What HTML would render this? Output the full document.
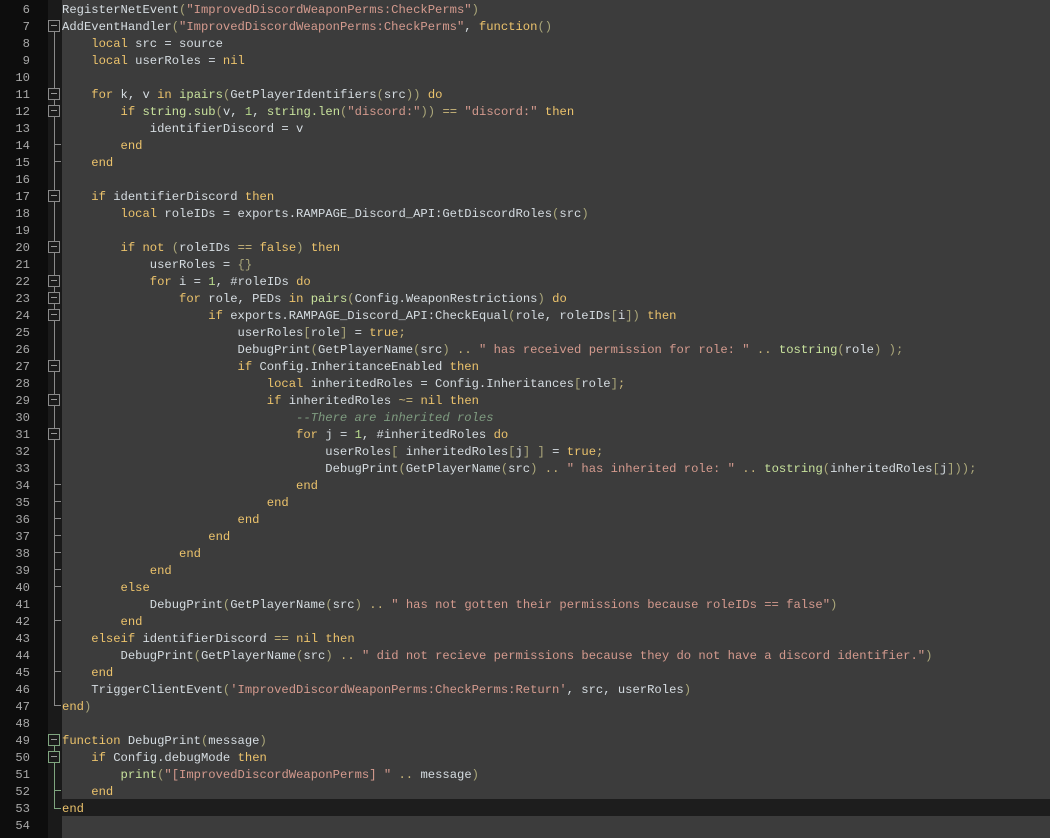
<!DOCTYPE html>
<html><head><meta charset="utf-8"><style>
body{margin:0;width:1050px;height:838px;background:#3c3c3c;overflow:hidden;position:relative;font-family:"Liberation Mono",monospace;font-size:12.2px}
#gut{position:absolute;left:0;top:0;width:48px;height:838px;background:#0d0d0d}
#fold{position:absolute;left:48px;top:0;width:14px;height:838px;background:#1a1a1a}
#cur{position:absolute;left:62px;top:799px;width:988px;height:17px;background:#1d1d1d}
.ln{position:absolute;left:0;width:30px;text-align:right;color:#a8a8a8;line-height:17px;height:17px;margin-top:2px}
.l{position:absolute;left:62px;white-space:pre;line-height:17px;height:17px;color:#d6dde2;margin-top:2px}
.k{color:#ecc36c}.s{color:#d49a8e}.f{color:#c8e29c}.p{color:#aba77a}.n{color:#b8d98c}.c{color:#7f9c80;font-style:italic}.o{color:#cdb97c}
.bx{position:absolute;left:48px;width:10px;height:10px;border:1px solid #8a8a8a;background:#1a1a1a}
.bx:after{content:"";position:absolute;left:2px;top:4px;width:6px;height:1px;background:#9a9a9a}
.vl{position:absolute;left:54px;width:1px;background:#8a8a8a}
.tk{position:absolute;left:54px;width:7px;height:1px;background:#8a8a8a}
.g{background:#7fa57f}
</style></head><body>
<div id="gut"></div><div id="fold"></div><div id="cur"></div>
<div class="ln" style="top:0">6</div><div class="ln" style="top:17px">7</div><div class="ln" style="top:34px">8</div><div class="ln" style="top:51px">9</div><div class="ln" style="top:68px">10</div><div class="ln" style="top:85px">11</div><div class="ln" style="top:102px">12</div><div class="ln" style="top:119px">13</div><div class="ln" style="top:136px">14</div><div class="ln" style="top:153px">15</div><div class="ln" style="top:170px">16</div><div class="ln" style="top:187px">17</div><div class="ln" style="top:204px">18</div><div class="ln" style="top:221px">19</div><div class="ln" style="top:238px">20</div><div class="ln" style="top:255px">21</div><div class="ln" style="top:272px">22</div><div class="ln" style="top:289px">23</div><div class="ln" style="top:306px">24</div><div class="ln" style="top:323px">25</div><div class="ln" style="top:340px">26</div><div class="ln" style="top:357px">27</div><div class="ln" style="top:374px">28</div><div class="ln" style="top:391px">29</div><div class="ln" style="top:408px">30</div><div class="ln" style="top:425px">31</div><div class="ln" style="top:442px">32</div><div class="ln" style="top:459px">33</div><div class="ln" style="top:476px">34</div><div class="ln" style="top:493px">35</div><div class="ln" style="top:510px">36</div><div class="ln" style="top:527px">37</div><div class="ln" style="top:544px">38</div><div class="ln" style="top:561px">39</div><div class="ln" style="top:578px">40</div><div class="ln" style="top:595px">41</div><div class="ln" style="top:612px">42</div><div class="ln" style="top:629px">43</div><div class="ln" style="top:646px">44</div><div class="ln" style="top:663px">45</div><div class="ln" style="top:680px">46</div><div class="ln" style="top:697px">47</div><div class="ln" style="top:714px">48</div><div class="ln" style="top:731px">49</div><div class="ln" style="top:748px">50</div><div class="ln" style="top:765px">51</div><div class="ln" style="top:782px">52</div><div class="ln" style="top:799px">53</div><div class="ln" style="top:816px">54</div>

<div class="vl" style="top:25px;height:680px"></div>
<div class="tk" style="top:705px"></div>
<div class="vl g" style="top:739px;height:69px"></div>
<div class="tk g" style="top:808px"></div>
<div class="tk" style="top:161px"></div><div class="tk" style="top:144px"></div>
<div class="tk" style="top:586px"></div><div class="tk" style="top:620px"></div><div class="tk" style="top:671px"></div>
<div class="tk" style="top:569px"></div><div class="tk" style="top:552px"></div><div class="tk" style="top:535px"></div><div class="tk" style="top:518px"></div><div class="tk" style="top:501px"></div><div class="tk" style="top:484px"></div>
<div class="tk g" style="top:790px"></div>
<div class="bx" style="top:20px"></div><div class="bx" style="top:88px"></div><div class="bx" style="top:105px"></div><div class="bx" style="top:190px"></div><div class="bx" style="top:241px"></div><div class="bx" style="top:275px"></div><div class="bx" style="top:292px"></div><div class="bx" style="top:309px"></div><div class="bx" style="top:360px"></div><div class="bx" style="top:394px"></div><div class="bx" style="top:428px"></div><div class="bx" style="top:734px;border-color:#7fa57f"></div><div class="bx" style="top:751px;border-color:#7fa57f"></div>

<div class="l" style="top:0">RegisterNetEvent<span class="p">(</span><span class="s">"ImprovedDiscordWeaponPerms:CheckPerms"</span><span class="p">)</span></div>
<div class="l" style="top:17px">AddEventHandler<span class="p">(</span><span class="s">"ImprovedDiscordWeaponPerms:CheckPerms"</span>, <span class="k">function</span><span class="p">()</span></div>
<div class="l" style="top:34px">    <span class="k">local</span> src = source</div>
<div class="l" style="top:51px">    <span class="k">local</span> userRoles = <span class="k">nil</span></div>
<div class="l" style="top:85px">    <span class="k">for</span> k, v <span class="k">in</span> <span class="f">ipairs</span><span class="p">(</span>GetPlayerIdentifiers<span class="p">(</span>src<span class="p">))</span> <span class="k">do</span></div>
<div class="l" style="top:102px">        <span class="k">if</span> <span class="f">string.sub</span><span class="p">(</span>v, <span class="n">1</span>, <span class="f">string.len</span><span class="p">(</span><span class="s">"discord:"</span><span class="p">))</span> <span class="o">==</span> <span class="s">"discord:"</span> <span class="k">then</span></div>
<div class="l" style="top:119px">            identifierDiscord = v</div>
<div class="l" style="top:136px">        <span class="k">end</span></div>
<div class="l" style="top:153px">    <span class="k">end</span></div>
<div class="l" style="top:187px">    <span class="k">if</span> identifierDiscord <span class="k">then</span></div>
<div class="l" style="top:204px">        <span class="k">local</span> roleIDs = exports.RAMPAGE_Discord_API:GetDiscordRoles<span class="p">(</span>src<span class="p">)</span></div>
<div class="l" style="top:238px">        <span class="k">if</span> <span class="k">not</span> <span class="p">(</span>roleIDs <span class="o">==</span> <span class="k">false</span><span class="p">)</span> <span class="k">then</span></div>
<div class="l" style="top:255px">            userRoles = <span class="p">{}</span></div>
<div class="l" style="top:272px">            <span class="k">for</span> i = <span class="n">1</span>, #roleIDs <span class="k">do</span></div>
<div class="l" style="top:289px">                <span class="k">for</span> role, PEDs <span class="k">in</span> <span class="f">pairs</span><span class="p">(</span>Config.WeaponRestrictions<span class="p">)</span> <span class="k">do</span></div>
<div class="l" style="top:306px">                    <span class="k">if</span> exports.RAMPAGE_Discord_API:CheckEqual<span class="p">(</span>role, roleIDs<span class="p">[</span>i<span class="p">])</span> <span class="k">then</span></div>
<div class="l" style="top:323px">                        userRoles<span class="p">[</span>role<span class="p">]</span> = <span class="k">true</span><span class="o">;</span></div>
<div class="l" style="top:340px">                        DebugPrint<span class="p">(</span>GetPlayerName<span class="p">(</span>src<span class="p">)</span> <span class="o">..</span> <span class="s">" has received permission for role: "</span> <span class="o">..</span> <span class="f">tostring</span><span class="p">(</span>role<span class="p">)</span> <span class="p">);</span></div>
<div class="l" style="top:357px">                        <span class="k">if</span> Config.InheritanceEnabled <span class="k">then</span></div>
<div class="l" style="top:374px">                            <span class="k">local</span> inheritedRoles = Config.Inheritances<span class="p">[</span>role<span class="p">]</span><span class="o">;</span></div>
<div class="l" style="top:391px">                            <span class="k">if</span> inheritedRoles <span class="o">~=</span> <span class="k">nil</span> <span class="k">then</span></div>
<div class="l" style="top:408px">                                <span class="c">--There are inherited roles</span></div>
<div class="l" style="top:425px">                                <span class="k">for</span> j = <span class="n">1</span>, #inheritedRoles <span class="k">do</span></div>
<div class="l" style="top:442px">                                    userRoles<span class="p">[</span> inheritedRoles<span class="p">[</span>j<span class="p">]</span> <span class="p">]</span> = <span class="k">true</span><span class="o">;</span></div>
<div class="l" style="top:459px">                                    DebugPrint<span class="p">(</span>GetPlayerName<span class="p">(</span>src<span class="p">)</span> <span class="o">..</span> <span class="s">" has inherited role: "</span> <span class="o">..</span> <span class="f">tostring</span><span class="p">(</span>inheritedRoles<span class="p">[</span>j<span class="p">]));</span></div>
<div class="l" style="top:476px">                                <span class="k">end</span></div>
<div class="l" style="top:493px">                            <span class="k">end</span></div>
<div class="l" style="top:510px">                        <span class="k">end</span></div>
<div class="l" style="top:527px">                    <span class="k">end</span></div>
<div class="l" style="top:544px">                <span class="k">end</span></div>
<div class="l" style="top:561px">            <span class="k">end</span></div>
<div class="l" style="top:578px">        <span class="k">else</span></div>
<div class="l" style="top:595px">            DebugPrint<span class="p">(</span>GetPlayerName<span class="p">(</span>src<span class="p">)</span> <span class="o">..</span> <span class="s">" has not gotten their permissions because roleIDs == false"</span><span class="p">)</span></div>
<div class="l" style="top:612px">        <span class="k">end</span></div>
<div class="l" style="top:629px">    <span class="k">elseif</span> identifierDiscord <span class="o">==</span> <span class="k">nil</span> <span class="k">then</span></div>
<div class="l" style="top:646px">        DebugPrint<span class="p">(</span>GetPlayerName<span class="p">(</span>src<span class="p">)</span> <span class="o">..</span> <span class="s">" did not recieve permissions because they do not have a discord identifier."</span><span class="p">)</span></div>
<div class="l" style="top:663px">    <span class="k">end</span></div>
<div class="l" style="top:680px">    TriggerClientEvent<span class="p">(</span><span class="s">'ImprovedDiscordWeaponPerms:CheckPerms:Return'</span>, src, userRoles<span class="p">)</span></div>
<div class="l" style="top:697px"><span class="k">end</span><span class="p">)</span></div>
<div class="l" style="top:731px"><span class="k">function</span> DebugPrint<span class="p">(</span>message<span class="p">)</span></div>
<div class="l" style="top:748px">    <span class="k">if</span> Config.debugMode <span class="k">then</span></div>
<div class="l" style="top:765px">        <span class="f">print</span><span class="p">(</span><span class="s">"[ImprovedDiscordWeaponPerms] "</span> <span class="o">..</span> message<span class="p">)</span></div>
<div class="l" style="top:782px">    <span class="k">end</span></div>
<div class="l" style="top:799px"><span class="k">end</span></div>
</body></html>
